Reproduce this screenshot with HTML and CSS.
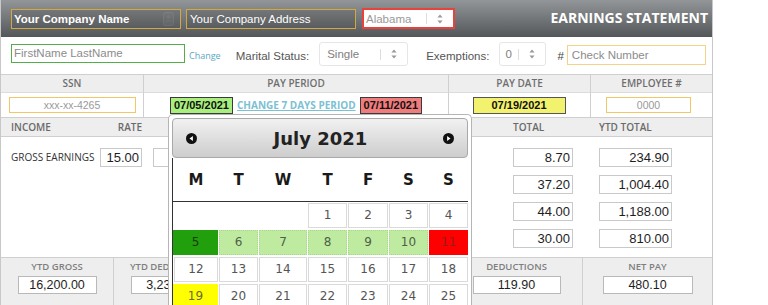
FILE: index.html
```html
<!DOCTYPE html>
<html lang="en">
<head>
<meta charset="utf-8">
<title>Earnings Statement</title>
<link rel="stylesheet" href="styles.css">
</head>
<body>
<div class="sheet">
  <div class="topbar">
    <div class="field company-name"><span>Your Company Name</span>
      <svg class="autofill" width="11" height="14" viewBox="0 0 11 14"><rect x="0.5" y="0.5" width="10" height="13" rx="2" fill="rgba(255,255,255,0.03)" stroke="rgba(255,255,255,0.08)"/><circle cx="5.5" cy="5" r="1.8" fill="rgba(255,255,255,0.06)"/><path d="M2.5 10.5 Q5.5 7 8.5 10.5" fill="none" stroke="rgba(255,255,255,0.06)"/></svg>
    </div>
    <div class="field company-address"><span>Your Company Address</span></div>
    <div class="select state"><span class="val">Alabama</span><i class="sep"></i><span class="arr"><svg width="6" height="10" viewBox="0 0 6 10"><path d="M3 0.5 L5.6 3.6 H0.4Z M3 9.5 L5.6 6.4 H0.4Z" fill="#9a9a9a"/></svg></span></div>
    <h1 class="title">EARNINGS STATEMENT</h1>
  </div>

  <div class="emp">
    <div class="name">FirstName LastName</div>
    <a class="change">Change</a>
    <span class="lbl lbl-marital">Marital Status:</span>
    <div class="select sel-single"><span class="val">Single</span><i class="sep"></i><span class="arr"><svg width="6" height="10" viewBox="0 0 6 10"><path d="M3 0.5 L5.6 3.6 H0.4Z M3 9.5 L5.6 6.4 H0.4Z" fill="#9a9a9a"/></svg></span></div>
    <span class="lbl lbl-exempt">Exemptions:</span>
    <div class="select sel-exempt"><span class="val">0</span><i class="sep"></i><span class="arr"><svg width="6" height="10" viewBox="0 0 6 10"><path d="M3 0.5 L5.6 3.6 H0.4Z M3 9.5 L5.6 6.4 H0.4Z" fill="#9a9a9a"/></svg></span></div>
    <span class="lbl hash">#</span>
    <div class="check">Check Number</div>
  </div>

  <div class="info">
    <div class="h">SSN</div>
    <div class="h">PAY PERIOD</div>
    <div class="h">PAY DATE</div>
    <div class="h last">EMPLOYEE #</div>
    <div class="v"><div class="ssn">xxx-xx-4265</div></div>
    <div class="v period">
      <span class="datebox start">07/05/2021</span>
      <a class="period-link">CHANGE 7 DAYS PERIOD</a>
      <span class="datebox end">07/11/2021</span>
    </div>
    <div class="v"><span class="datebox paydate">07/19/2021</span></div>
    <div class="v last emp-no-cell"><div class="empno">0000</div></div>
  </div>

  <div class="income-head">
    <span>INCOME</span>
    <span class="right">RATE</span>
    <span class="hrs-head">HOURS</span>
    <span>TOTAL</span>
    <span>YTD TOTAL</span>
  </div>

  <div class="income-body">
    <div class="irow">
      <span class="ilabel">GROSS EARNINGS</span>
      <div class="num">15.00</div>
      <div class="mid"><div class="num hours">40.00</div><div class="num cur">600.00</div><span class="dlabel">FICA - MEDICARE</span></div>
      <div class="num total">8.70</div>
      <div class="num ytd">234.90</div>
    </div>
    <div class="irow">
      <span></span><span></span>
      <div class="mid"><span class="dlabel">FICA - SOCIAL SECURITY</span></div>
      <div class="num total">37.20</div>
      <div class="num ytd">1,004.40</div>
    </div>
    <div class="irow">
      <span></span><span></span>
      <div class="mid"><span class="dlabel">FEDERAL TAX</span></div>
      <div class="num total">44.00</div>
      <div class="num ytd">1,188.00</div>
    </div>
    <div class="irow">
      <span></span><span></span>
      <div class="mid"><span class="dlabel">STATE TAX</span></div>
      <div class="num total">30.00</div>
      <div class="num ytd">810.00</div>
    </div>
  </div>

  <div class="summary">
    <div class="scell"><span class="slabel">YTD GROSS</span><div class="sval w79">16,200.00</div></div>
    <div class="scell"><span class="slabel">YTD DEDUCTIONS</span><div class="sval w80">3,237.30</div></div>
    <div class="scell"><span class="slabel">YTD NET PAY</span><div class="sval w80">12,962.70</div></div>
    <div class="scell"><span class="slabel">GROSS PAY</span><div class="sval w80">600.00</div></div>
    <div class="scell"><span class="slabel">DEDUCTIONS</span><div class="sval w87">119.90</div></div>
    <div class="scell last"><span class="slabel">NET PAY</span><div class="sval w89">480.10</div></div>
  </div>

  <div class="cal">
    <div class="cal-head">
      <svg width="11" height="11" viewBox="0 0 11 11"><circle cx="5.5" cy="5.5" r="5.5" fill="#111"/><path d="M6.9 3 L3.5 5.5 L6.9 8 Z" fill="#fff"/></svg>
      <span class="cal-title">July 2021</span>
      <svg width="11" height="11" viewBox="0 0 11 11"><circle cx="5.5" cy="5.5" r="5.5" fill="#111"/><path d="M4.1 3 L7.5 5.5 L4.1 8 Z" fill="#fff"/></svg>
    </div>
    <div class="cal-body">
      <div class="dow"><span>M</span><span>T</span><span>W</span><span>T</span><span>F</span><span>S</span><span>S</span></div>
      <div class="days">
        <span class="empty"></span><span class="empty"></span><span class="empty"></span>
        <span>1</span><span>2</span><span>3</span><span>4</span>
        <span class="d-start">5</span><span class="d-in">6</span><span class="d-in">7</span><span class="d-in">8</span><span class="d-in">9</span><span class="d-in">10</span><span class="d-end">11</span>
        <span>12</span><span>13</span><span>14</span><span>15</span><span>16</span><span>17</span><span>18</span>
        <span class="d-pay">19</span><span>20</span><span>21</span><span>22</span><span>23</span><span>24</span><span>25</span>
      </div>
    </div>
  </div>
</div>
</body>
</html>
```

FILE: styles.css
```css
html, body {
  margin: 0;
  padding: 0;
}
body {
  width: 768px;
  height: 305px;
  overflow: hidden;
  background: #fff;
  font-family: "Liberation Sans", Arial, sans-serif;
}
.sheet {
  position: relative;
  width: 711px;
  height: 305px;
  overflow: hidden;
  border-left: 1px solid #c8c8c8;
  border-right: 1px solid #c8c8c8;
}

/* ---------- top bar ---------- */
.topbar {
  display: flex;
  align-items: center;
  height: 37px;
  padding: 0 4px 0 10px;
  background: linear-gradient(#939698, #545759);
}
.field {
  box-sizing: border-box;
  width: 170px;
  height: 20px;
  border: 1px solid #d3a841;
  background: rgba(45, 45, 45, 0.16);
  color: #fff;
  font-size: 11.5px;
  line-height: 18px;
  padding: 0 6px 0 2px;
  display: flex;
  align-items: center;
  justify-content: space-between;
  white-space: nowrap;
}
.company-name {
  font-weight: 700;
}
.company-address {
  margin-left: 5px;
  padding-left: 3px;
}
.select {
  box-sizing: border-box;
  display: flex;
  align-items: center;
  background: #fff;
  font-size: 11.5px;
  color: #999;
  white-space: nowrap;
}
.select .val {
  flex: 1;
}
.select .sep {
  width: 1px;
  height: 11px;
  background: #dedede;
}
.select .arr {
  width: 26px;
  display: flex;
  justify-content: center;
}
.state {
  margin-left: 6px;
  width: 93px;
  height: 21px;
  border: 2px solid #e8423d;
  padding-left: 2px;
}
.title {
  margin: 0 0 2px auto;
  font-family: "Open Sans", sans-serif;
  font-weight: 700;
  font-size: 14px;
  color: #fff;
  line-height: 18px;
}

/* ---------- employee row ---------- */
.emp {
  display: flex;
  align-items: center;
  height: 37px;
  padding-left: 10px;
  border-bottom: 1px solid #cfcfcf;
  font-size: 11.5px;
  color: #555;
  white-space: nowrap;
}
.name {
  box-sizing: border-box;
  width: 174px;
  height: 19px;
  border: 1px solid #53ad4a;
  color: #8c8c8c;
  padding-left: 2px;
  line-height: 17px;
  margin-bottom: 4px;
}
.change {
  margin-left: 4px;
  font-family: "Open Sans", sans-serif;
  font-size: 9px;
  color: #5aa8c3;
}
.lbl-marital {
  margin-left: 15px;
}
.sel-single {
  margin-left: 10px;
  width: 89px;
  height: 24px;
  border: 1px solid #e6e6e6;
  border-radius: 3px;
  padding-left: 7px;
  color: #808080;
  margin-bottom: 3px;
}
.lbl-exempt {
  margin-left: 18px;
}
.sel-exempt {
  margin-left: 10px;
  width: 47px;
  height: 24px;
  border: 1px solid #e6e6e6;
  border-radius: 3px;
  padding-left: 5px;
  color: #808080;
  margin-bottom: 3px;
}
.hash {
  margin-left: 11px;
  color: #444;
}
.check {
  box-sizing: border-box;
  margin-left: 3px;
  width: 139px;
  height: 20px;
  border: 1px solid #f4d386;
  color: #8c8c8c;
  padding-left: 4px;
  line-height: 18px;
  margin-bottom: 2px;
}

/* ---------- info grid ---------- */
.info {
  display: grid;
  grid-template-columns: 143px 305px 142px 121px;
}
.info .h {
  box-sizing: border-box;
  height: 18px;
  background: #eeeeee;
  border-right: 1px solid #cfcfcf;
  border-bottom: 1px solid #dcdcdc;
  font-family: "Open Sans", sans-serif;
  font-weight: 600;
  font-size: 10px;
  line-height: 17px;
  color: #6e6e6e;
  text-align: center;
}
.info .v {
  box-sizing: border-box;
  height: 25px;
  border-right: 1px solid #cfcfcf;
  border-bottom: 1px solid #cfcfcf;
  display: flex;
  align-items: center;
  justify-content: center;
}
.info .last {
  border-right: none;
}
.ssn, .empno {
  box-sizing: border-box;
  height: 16px;
  border: 1px solid #f3c766;
  font-size: 10.5px;
  line-height: 14px;
  color: #9a9a9a;
  text-align: center;
}
.ssn {
  width: 127px;
}
.empno {
  width: 85px;
}
.emp-no-cell {
  padding-right: 6px;
}
.period {
  gap: 4px;
}
.datebox {
  box-sizing: border-box;
  height: 17px;
  border: 1px solid #3a3a3a;
  padding: 0 3px;
  font-weight: 700;
  font-size: 11px;
  line-height: 15px;
  color: #111;
  text-align: center;
}
.datebox.start {
  background: #a9ef7e;
}
.datebox.end {
  background: #f07c7c;
}
.datebox.paydate {
  width: 93px;
  background: #f3f26e;
  border-color: #555;
  margin-right: 1px;
}
.period-link {
  font-family: "Open Sans", sans-serif;
  font-weight: 700;
  font-size: 10px;
  color: #7cc0d3;
  text-decoration: underline;
  white-space: nowrap;
}

/* ---------- income ---------- */
.income-head, .irow {
  display: grid;
  grid-template-columns: 89px 42px 371px 86px 1fr;
  padding-left: 10px;
}
.income-head {
  box-sizing: border-box;
  height: 19px;
  background: #eeeeee;
  border-bottom: 1px solid #cfcfcf;
  font-family: "Open Sans", sans-serif;
  font-weight: 600;
  font-size: 10px;
  line-height: 18px;
  color: #6a6a6a;
}
.income-head .right {
  text-align: right;
}
.hrs-head {
  padding-left: 60px;
}
.income-body {
  box-sizing: border-box;
  height: 120px;
  padding-top: 11px;
}
.irow {
  height: 27px;
  align-items: start;
}
.ilabel {
  font-family: "Open Sans", sans-serif;
  font-size: 10px;
  line-height: 19px;
  color: #333;
  white-space: nowrap;
}
.num {
  box-sizing: border-box;
  height: 19px;
  border: 1px solid #c9c9c9;
  background: #fff;
  font-size: 13px;
  line-height: 17px;
  color: #1e1e1e;
  text-align: right;
  padding-right: 2px;
}
.num.total {
  width: 60px;
}
.num.ytd {
  width: 73px;
}
.mid {
  display: flex;
  align-items: flex-start;
  gap: 10px;
  padding-left: 11px;
}
.num.hours, .num.cur {
  width: 60px;
}
.dlabel {
  font-family: "Open Sans", sans-serif;
  font-size: 10px;
  line-height: 19px;
  color: #333;
  margin-left: 40px;
  white-space: nowrap;
}

/* ---------- summary ---------- */
.summary {
  display: grid;
  grid-template-columns: 113px 114px 112px 111px 132px 129px;
  border-top: 1px solid #cfcfcf;
  background: #eeeeee;
  height: 48px;
}
.scell {
  display: flex;
  flex-direction: column;
  align-items: center;
  border-right: 1px solid #cfcfcf;
  padding-top: 2px;
}
.scell.last {
  border-right: none;
}
.slabel {
  font-family: "Open Sans", sans-serif;
  font-weight: 600;
  font-size: 9.5px;
  line-height: 14px;
  color: #7f7f7f;
  white-space: nowrap;
}
.sval {
  box-sizing: border-box;
  margin-top: 2px;
  height: 18px;
  border: 1px solid #b9b9b9;
  background: #fff;
  font-size: 12.5px;
  line-height: 16px;
  color: #1e1e1e;
  text-align: center;
}
.w79 { width: 79px; }
.w80 { width: 80px; }
.w87 { width: 88px; }
.w89 { width: 90px; }

/* ---------- calendar popup ---------- */
.cal {
  position: absolute;
  left: 167px;
  top: 114px;
  box-sizing: border-box;
  width: 304px;
  height: 200px;
  padding: 3px;
  border: 1px solid #b5b5b5;
  border-bottom: none;
  border-radius: 5px 5px 0 0;
  background: #fff;
  font-family: "DejaVu Sans", Verdana, sans-serif;
}
.cal-head {
  box-sizing: border-box;
  height: 40px;
  border: 1px solid #a9a9a9;
  border-radius: 4px;
  background: linear-gradient(#f1f1f1, #cdcdcd);
  display: flex;
  align-items: center;
  justify-content: space-between;
  padding: 0 13px;
}
.cal-title {
  font-weight: 700;
  font-size: 18px;
  color: #222;
  margin-left: 1px;
}
.cal-body {
  border-left: 1px solid #333;
}
.dow, .days {
  display: grid;
  grid-template-columns: 44px 39px 48px 39px 40px 39px 39px;
  column-gap: 1px;
  padding-left: 1px;
}
.dow {
  box-sizing: border-box;
  height: 44px;
  border-bottom: 1px solid #333;
  align-items: center;
  text-align: center;
  font-weight: 700;
  font-size: 15px;
  color: #1a1a1a;
}
.days {
  grid-auto-rows: 25px;
  row-gap: 2px;
  padding-top: 1px;
}
.days span {
  box-sizing: border-box;
  border: 1px solid #dadada;
  background: #fff;
  font-size: 12px;
  line-height: 23px;
  text-align: center;
  color: #555;
}
.days span.empty {
  border-color: transparent;
}
.days span.d-start {
  background: #229f0c;
  border-color: #229f0c;
  color: #1d3a10;
  margin-left: -1px;
}
.days span.d-in {
  background: #bfeba0;
  border: 1px dotted #a9d78c;
  color: #4f5f48;
}
.days span.d-end {
  background: #ff0000;
  border-color: #ff0000;
  color: #9a1a1a;
}
.days span.d-pay {
  background: #ffff00;
  border-color: #ffff00;
  color: #6a6a3a;
  margin-left: -1px;
}
```
